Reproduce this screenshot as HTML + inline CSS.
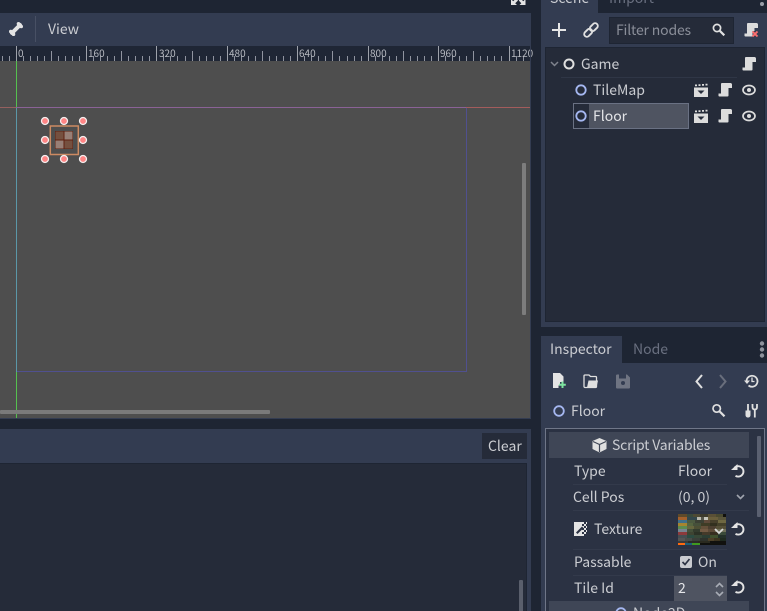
<!DOCTYPE html>
<html><head><meta charset="utf-8">
<style>
html,body{margin:0;padding:0;background:#1e2533;width:767px;height:611px;overflow:hidden}
.a{position:absolute}
.t{position:absolute;font:14px/20px "Noto Sans CJK JP","Liberation Sans",sans-serif;color:#cbcdd2;white-space:nowrap}
.l{font-size:10px;line-height:12px;color:#b8bbc2}
svg{position:absolute;overflow:visible}
</style></head><body>
<div class="a" style="left:0;top:0;width:767px;height:611px;overflow:hidden;background:#1e2533">

<!-- canvas panel -->
<div class="a" style="left:0;top:13px;width:531px;height:33px;background:#333c51"></div>
<div class="a" style="left:35px;top:16px;width:1px;height:26px;background:#485064"></div>
<svg style="left:0;top:0" width="40" height="46"><g fill="#e4e4e4"><path d="M12 33L20 25" stroke="#e4e4e4" stroke-width="4" stroke-linecap="round"/><circle cx="10.800" cy="31.500" r="1.800"/><circle cx="13.500" cy="34.200" r="1.800"/><circle cx="18.500" cy="23.800" r="1.800"/><circle cx="21.200" cy="26.500" r="1.800"/></g></svg>
<div class="t" style="left:48px;top:19px">View</div>
<svg style="left:0;top:0" width="531" height="8"><path d="M511 0V5H517L515.200 3.200 518 0.500 517.500 0H514.500L513.200 1.300 512 0zM525.500 0V5H519.500L521.300 3.200 518.800 0.500 519.200 0H522L523.300 1.300 524.500 0z" fill="#e4e4e4"/></svg>

<!-- ruler -->
<svg style="left:0;top:46px" width="531" height="15">
<rect width="531" height="15" fill="#1f2635"/>
<path d="M16.500 0v15M86.500 0v15M156.500 0v15M227.500 0v15M297.500 0v15M368.500 0v15M438.500 0v15M509.500 0v15" stroke="#9ea2ab" fill="none"/>
<path d="M51.500 5v10M121.500 5v10M192.500 5v10M262.500 5v10M332.500 5v10M403.500 5v10M473.500 5v10" stroke="#9094a0" fill="none"/>
<path d="M2.500 10v5M9.500 10v5M23.500 10v5M30.500 10v5M37.500 10v5M44.500 10v5M58.500 10v5M65.500 10v5M72.500 10v5M79.500 10v5M93.500 10v5M100.500 10v5M107.500 10v5M114.500 10v5M128.500 10v5M135.500 10v5M142.500 10v5M149.500 10v5M163.500 10v5M170.500 10v5M177.500 10v5M185.500 10v5M199.500 10v5M206.500 10v5M213.500 10v5M220.500 10v5M234.500 10v5M241.500 10v5M248.500 10v5M255.500 10v5M269.500 10v5M276.500 10v5M283.500 10v5M290.500 10v5M304.500 10v5M311.500 10v5M318.500 10v5M325.500 10v5M339.500 10v5M347.500 10v5M354.500 10v5M361.500 10v5M375.500 10v5M382.500 10v5M389.500 10v5M396.500 10v5M410.500 10v5M417.500 10v5M424.500 10v5M431.500 10v5M445.500 10v5M452.500 10v5M459.500 10v5M466.500 10v5M480.500 10v5M487.500 10v5M494.500 10v5M501.500 10v5M516.500 10v5M523.500 10v5" stroke="#9094a0" fill="none"/>
</svg>
<div class="t l" style="left:18px;top:47px">0</div>
<div class="t l" style="left:88px;top:47px">160</div>
<div class="t l" style="left:159px;top:47px">320</div>
<div class="t l" style="left:229px;top:47px">480</div>
<div class="t l" style="left:299px;top:47px">640</div>
<div class="t l" style="left:370px;top:47px">800</div>
<div class="t l" style="left:440px;top:47px">960</div>
<div class="t l" style="left:511px;top:47px">1120</div>

<!-- viewport -->
<div class="a" style="left:0;top:61px;width:530px;height:357px;background:#4e4e4e"></div>
<div class="a" style="left:530px;top:13px;width:1px;height:406px;background:#333c51"></div>
<div class="a" style="left:0;top:418px;width:531px;height:1px;background:#333c51"></div>
<svg style="left:0;top:0" width="531" height="420">
<path d="M0 107.500H16" stroke="#95605f" fill="none"/>
<path d="M16 107.500H466" stroke="#8a6296" fill="none"/>
<path d="M466 107.500H530" stroke="#a35c5c" fill="none"/>
<path d="M16.500 61V107" stroke="#55c04f" fill="none"/>
<path d="M16.500 108V372" stroke="#5b97a8" fill="none"/>
<path d="M16.500 372V418" stroke="#55c04f" fill="none"/>
<path d="M466.500 108V371.500H17" stroke="#50508f" fill="none"/>
<rect x="522" y="163" width="4" height="152" rx="1" fill="#7d7d7d"/>
<rect x="0" y="410" width="270" height="4" rx="1" fill="#7a7a7a"/>
<!-- tile -->
<rect x="55" y="131" width="18" height="18" fill="#5e2010"/>
<rect x="55.500" y="131.500" width="8" height="8" fill="#75503f"/>
<rect x="64.500" y="131.500" width="8" height="8" fill="#977f76"/>
<rect x="55.500" y="140.500" width="8" height="8" fill="#977f76"/>
<rect x="64.500" y="140.500" width="8" height="8" fill="#75503f"/>
<rect x="50.300" y="126" width="28" height="28.500" fill="none" stroke="#cc8a62" stroke-width="1.500"/>
<g fill="#ff8585" stroke="#f4eeee" stroke-width="1.300">
<circle cx="45" cy="121" r="3.500"/><circle cx="64" cy="121" r="3.500"/><circle cx="83" cy="121" r="3.500"/>
<circle cx="45" cy="140" r="3.500"/><circle cx="83" cy="140" r="3.500"/>
<circle cx="45" cy="159" r="3.500"/><circle cx="64" cy="159" r="3.500"/><circle cx="83" cy="159" r="3.500"/>
</g>
</svg>

<!-- bottom panel -->
<div class="a" style="left:0;top:429px;width:531px;height:182px;background:#333c51"></div>
<div class="a" style="left:0;top:463px;width:526px;height:148px;background:#252b39;border-top:1px solid #1e2533;border-right:1px solid #1e2533"></div>
<div class="a" style="left:482px;top:433px;width:45px;height:26px;background:#252b39"></div>
<div class="t" style="left:488px;top:436px">Clear</div>
<div class="a" style="left:519px;top:580px;width:3.500px;height:31px;background:#5a5f6c;border-radius:1px 1px 0 0"></div>

<!-- scene dock -->
<div class="a" style="left:541px;top:0;width:57px;height:13px;background:#333c51"></div>
<div class="t" style="left:550px;top:-12px">Scene</div>
<div class="t" style="left:609px;top:-12px;color:#6a7080">Import</div>
<div class="a" style="left:760px;top:2px;width:4px;height:4px;border-radius:2px;background:#9a9ea8"></div>
<div class="a" style="left:541px;top:13px;width:226px;height:314px;background:#333c51"></div>
<div class="a" style="left:545px;top:47px;width:218px;height:273px;background:#252b39;border:1px solid #1e2533"></div>
<svg style="left:541px;top:13px" width="226" height="34">
<path d="M18 10V24M11 17H25" stroke="#e6e6e6" stroke-width="2" fill="none"/>
<g transform="rotate(-45 50 17)" fill="none" stroke="#e0e0e0" stroke-width="1.900"><rect x="41.500" y="14.300" width="9" height="5.400" rx="2.700"/><rect x="49.500" y="14.300" width="9" height="5.400" rx="2.700"/></g>
</svg>
<div class="a" style="left:609px;top:17px;width:123px;height:25px;background:#252b39;border:1px solid #1e2533"></div>
<div class="t" style="left:616px;top:20px;color:#8a8e99;letter-spacing:-.17px">Filter nodes</div>
<svg style="left:712px;top:23px" width="14" height="14"><circle cx="5" cy="5" r="3.600" fill="none" stroke="#e0e0e0" stroke-width="1.700"/><path d="M7.800 7.800L12.300 12.300" stroke="#e0e0e0" stroke-width="2.200"/></svg>
<svg style="left:744px;top:23px" width="16" height="15"><path d="M4 0h8.500c.8 0 1.500.7 1.500 1.500V5h-3.500v3h-2v5.500H1.500c-.8 0-1.200-.6-1-1.500V10.500H3V1c0-.6.400-1 1-1z" fill="#dcdcdc"/><path d="M8.500 8.500l5 5m0-5l-5 5" stroke="#ff6e6e" stroke-width="1.900"/></svg>

<!-- tree rows -->
<svg style="left:545px;top:47px" width="221" height="90">
<path d="M6 15l3.500 3.500 3.500-3.500" fill="none" stroke="#7f838d" stroke-width="1.500"/>
<circle cx="24" cy="17" r="4.500" fill="none" stroke="#e0e0e0" stroke-width="2"/>
<path d="M16 30.500H192" stroke="#2f3646"/>
<circle cx="36" cy="43" r="4.700" fill="none" stroke="#a5b7f0" stroke-width="1.800"/>
</svg>
<div class="t" style="left:581px;top:54px">Game</div>
<div class="t" style="left:593px;top:80px">TileMap</div>
<div class="a" style="left:573px;top:103px;width:116px;height:26px;box-sizing:border-box;background:#4f5461;border:1px solid #6a7183"></div>
<div class="a" style="left:574px;top:104px;width:15px;height:24px;background:#252b39"></div>
<svg style="left:574px;top:104px" width="16" height="24"><circle cx="7" cy="12" r="4.700" fill="none" stroke="#a5b7f0" stroke-width="1.800"/></svg>
<div class="t" style="left:593px;top:106px;color:#e4e5e8">Floor</div>
<svg style="left:690px;top:50px" width="77" height="80">
<defs>
<g id="sc"><path d="M4 0h8.500c.8 0 1.500.7 1.500 1.500V5h-3.500v7.500c0 .6-.4 1-1 1H1.500c-.8 0-1.200-.6-1-1.500V10.500H3V1c0-.6.400-1 1-1z" fill="#dcdcdc"/></g>
<g id="cl"><path d="M1 1.500h2v1.800H1zM4.500 1.200h2V3h-2zM8 1h2v1.800H8zM11.500.7h2v1.800h-2zM0 4.500h14V14H0z" fill="#dcdcdc"/><path d="M3.500 7.500h7l-3.500 3.500z" fill="#252b39"/></g>
<g id="ey"><ellipse cx="7" cy="7" rx="6" ry="4.500" fill="none" stroke="#dcdcdc" stroke-width="1.700"/><circle cx="7" cy="7" r="2" fill="#dcdcdc"/></g>
</defs>
<use href="#sc" x="52" y="7"/>
<use href="#cl" x="4" y="33"/><use href="#sc" x="28" y="33"/><use href="#ey" x="52" y="33"/>
<use href="#cl" x="4" y="59"/><use href="#sc" x="28" y="59"/><use href="#ey" x="52" y="59"/>
</svg>

<!-- inspector -->
<div class="a" style="left:541px;top:336px;width:81px;height:27px;background:#333c51"></div>
<div class="a" style="left:541px;top:363px;width:226px;height:248px;background:#333c51"></div>
<div class="t" style="left:550px;top:339px">Inspector</div>
<div class="t" style="left:633px;top:339px;color:#6a7080">Node</div>
<svg style="left:758px;top:340px" width="8" height="20"><g fill="#8e929c"><circle cx="4" cy="3.500" r="2.200"/><circle cx="4" cy="9.500" r="2.200"/><circle cx="4" cy="15.500" r="2.200"/></g></svg>
<svg style="left:550px;top:372px" width="217" height="50">
<path d="M3 1h7l3.500 3.500V10H10v3.500H8.500V16H3z" fill="#e4e4e4"/><path d="M12.500 9.500v6.500M9.200 12.800h6.600" stroke="#7fe5a0" stroke-width="2"/>
<path d="M35 15.500c-.5 0-1-.5-1-1V4c0-.6.500-1 1-1h4l1.500 1.500h5c.6 0 1 .4 1 1v9c0 .6-.4 1-1 1z" fill="none" stroke="#e0e0e0" stroke-width="1.300"/><path d="M37 15.500l1.500-7H48l-1.500 7z" fill="#e0e0e0"/>
<path d="M67 2.500h10l3 3v10c0 .5-.5 1-1 1H67c-.5 0-1-.5-1-1v-12c0-.5.500-1 1-1z" fill="#6f7482"/><rect x="69" y="2.500" width="7" height="4" fill="#333c51"/><circle cx="73" cy="11" r="2" fill="#333c51"/>
<path d="M152 3L146.500 9.500 152 16" fill="none" stroke="#e0e0e0" stroke-width="2"/>
<path d="M170 3L175.500 9.500 170 16" fill="none" stroke="#696e7c" stroke-width="2"/>
<path d="M196.500 9A5.500 5.500 0 1 1 198.500 13.500" fill="none" stroke="#e0e0e0" stroke-width="1.800"/><path d="M194 8.500h6l-3 3.500z" fill="#e0e0e0"/><path d="M202 5.500V9.500h2.500" fill="none" stroke="#e0e0e0" stroke-width="1.300"/>
<circle cx="9" cy="39" r="4.800" fill="none" stroke="#a5b7f0" stroke-width="1.800"/>
<circle cx="166.700" cy="36.500" r="3.700" fill="none" stroke="#e0e0e0" stroke-width="1.700"/><path d="M169.700 39.500l4.800 4.800" stroke="#e0e0e0" stroke-width="2.200"/>
<path d="M198 32v6.500" stroke="#e0e0e0" stroke-width="1.800"/><path d="M195.500 38.500h5V43c0 1.500-1 2.500-2.500 2.500s-2.500-1-2.500-2.500z" fill="#e0e0e0"/><path d="M202.500 32v3c0 1.500.8 2.500 2.300 2.500s2.200-1 2.200-2.500v-3M204.800 37v8.500" fill="none" stroke="#e0e0e0" stroke-width="1.800"/>
</svg>
<div class="t" style="left:571px;top:401px">Floor</div>

<div class="a" style="left:545px;top:428px;width:220px;height:183px;box-sizing:border-box;background:#2b3243;border:1px solid #6f7688;border-bottom:0"></div>
<div class="a" style="left:549px;top:432px;width:200px;height:26px;background:#3f4656"></div>
<svg style="left:592px;top:438px" width="16" height="15"><path d="M7.500 0L14.500 3v8L7.500 14.500.5 11V3z" fill="#e0e0e0"/><path d="M1 3.500l6.500 3 6.500-3M7.500 6.500V14" fill="none" stroke="#3f4656" stroke-width="1.200"/></svg>
<div class="t" style="left:612px;top:435px;letter-spacing:-.2px">Script Variables</div>
<div class="a" style="left:757px;top:436px;width:4px;height:81px;background:#5a6070;border-radius:1px"></div>

<div class="a" style="left:573px;top:484px;width:154px;height:1px;background:#333a4b"></div>
<div class="a" style="left:573px;top:510px;width:176px;height:1px;background:#333a4b"></div>
<div class="a" style="left:573px;top:549px;width:154px;height:1px;background:#333a4b"></div>
<div class="a" style="left:573px;top:575px;width:154px;height:1px;background:#333a4b"></div>

<div class="t" style="left:574px;top:461px">Type</div>
<div class="t" style="left:678px;top:461px">Floor</div>
<div class="t" style="left:573px;top:487px">Cell Pos</div>
<div class="t" style="left:678px;top:487px">(0, 0)</div>
<div class="t" style="left:594px;top:519px">Texture</div>
<div class="t" style="left:574px;top:552px">Passable</div>
<div class="t" style="left:698px;top:552px">On</div>
<div class="t" style="left:574px;top:578px">Tile Id</div>
<div class="a" style="left:674px;top:576px;width:53px;height:25px;background:#4f5461"></div>
<div class="t" style="left:678px;top:578px;color:#e6e7ea">2</div>

<svg style="left:570px;top:460px" width="197" height="151">
<defs><g id="rv"><path d="M3.500 3.800A5.200 5.200 0 1 1 4.500 11.800" fill="none" stroke="#e4e4e4" stroke-width="1.900"/><path d="M0 6h6.500V0z" fill="#e4e4e4"/></g></defs>
<use href="#rv" x="161" y="4"/><use href="#rv" x="161" y="62"/><use href="#rv" x="161" y="120"/>
<path d="M167 35l3.500 3.500 3.500-3.500" fill="none" stroke="#a0a4ae" stroke-width="1.600"/>
<!-- texture icon -->
<rect x="4" y="62" width="8" height="14" fill="#e4e4e4"/>
<path d="M12 62h2v2h-2zM16 62h1v2h-1zM14 64h2v2h-2zM12 66h2v2h-2zM16 66h1v2h-1zM14 68h2v2h-2zM12 70h2v2h-2zM16 70h1v2h-1zM14 72h2v2h-2zM12 74h2v2h-2z" fill="#e4e4e4"/>
<path d="M6 72.500l6-6 1.500 1.500-6 6z" fill="#2b3243"/>
<!-- checkbox -->
<rect x="110" y="96" width="12" height="12" rx="2" fill="#c9cbd0"/><path d="M112.500 102l2.500 2.500 4.500-5.500" fill="none" stroke="#2b3243" stroke-width="1.700"/>
<!-- spin arrows -->
<path d="M146 127l3.500-3.500 3.500 3.500M146 132l3.500 3.500 3.500-3.500" fill="none" stroke="#a8acb5" stroke-width="1.600"/>
<!-- texture thumb -->
<g transform="translate(108 54)">
<rect width="48" height="31" fill="#11110e"/>
<rect x="0" y="0" width="9" height="3" fill="#5f4a2a"/><rect x="9" y="0" width="6" height="3" fill="#3a4a3c"/><rect x="15" y="0" width="7" height="3" fill="#4e4a34"/><rect x="22" y="0" width="8" height="3" fill="#3c3a2c"/><rect x="30" y="0" width="8" height="3" fill="#5a5036"/><rect x="38" y="0" width="7" height="3" fill="#4a4a30"/>
<rect x="0" y="3" width="9" height="3" fill="#a3602c"/><rect x="9" y="3" width="10" height="3" fill="#33474c"/><rect x="19" y="3" width="4" height="3" fill="#b8b8ae"/><rect x="23" y="3" width="3" height="3" fill="#55554a"/><rect x="26" y="3" width="4" height="3" fill="#c4c4ba"/><rect x="30" y="3" width="10" height="3" fill="#6a5f3c"/><rect x="40" y="3" width="8" height="3" fill="#58543a"/>
<rect x="0" y="6" width="9" height="3" fill="#40708a"/><rect x="9" y="6" width="8" height="3" fill="#4c5a40"/><rect x="17" y="6" width="9" height="3" fill="#3c4034"/><rect x="26" y="6" width="6" height="3" fill="#5e4a3a"/><rect x="32" y="6" width="8" height="3" fill="#47402c"/><rect x="40" y="6" width="8" height="3" fill="#6f6842"/>
<rect x="0" y="9" width="9" height="3" fill="#a6852f"/><rect x="9" y="9" width="6" height="3" fill="#55643f"/><rect x="15" y="9" width="8" height="3" fill="#46503a"/><rect x="23" y="9" width="9" height="3" fill="#3f3c26"/><rect x="32" y="9" width="7" height="3" fill="#33301f"/><rect x="39" y="9" width="9" height="3" fill="#45412a"/>
<rect x="0" y="12" width="9" height="3" fill="#5c8c50"/><rect x="9" y="12" width="7" height="3" fill="#66663e"/><rect x="16" y="12" width="7" height="3" fill="#4d4f34"/><rect x="23" y="12" width="7" height="3" fill="#65503a"/><rect x="30" y="12" width="8" height="3" fill="#4c3f30"/><rect x="38" y="12" width="10" height="3" fill="#565038"/>
<rect x="0" y="15" width="9" height="3" fill="#778490"/><rect x="9" y="15" width="6" height="3" fill="#44503a"/><rect x="15" y="15" width="7" height="3" fill="#343c2e"/><rect x="22" y="15" width="8" height="3" fill="#725a44"/><rect x="30" y="15" width="7" height="3" fill="#5c4a38"/><rect x="37" y="15" width="11" height="3" fill="#70705a"/>
<rect x="0" y="18" width="9" height="3" fill="#8c3a3c"/><rect x="9" y="18" width="7" height="3" fill="#3e4432"/><rect x="16" y="18" width="8" height="3" fill="#2c3226"/><rect x="24" y="18" width="8" height="3" fill="#443a2a"/><rect x="32" y="18" width="8" height="3" fill="#372e20"/><rect x="40" y="18" width="8" height="3" fill="#3a4a3a"/>
<rect x="0" y="21" width="9" height="3" fill="#464e52"/><rect x="9" y="21" width="7" height="3" fill="#2c4c42"/><rect x="16" y="21" width="8" height="3" fill="#384838"/><rect x="24" y="21" width="8" height="3" fill="#2c3e34"/><rect x="32" y="21" width="8" height="3" fill="#40502e"/><rect x="40" y="21" width="8" height="3" fill="#233029"/>
<rect x="0" y="24" width="7" height="3" fill="#555555"/><rect x="7" y="24" width="7" height="3" fill="#484c48"/><rect x="14" y="24" width="8" height="3" fill="#3a3f3a"/><rect x="22" y="24" width="8" height="3" fill="#2e322c"/><rect x="30" y="24" width="6" height="3" fill="#4d4028"/><rect x="36" y="24" width="6" height="3" fill="#3c3420"/><rect x="42" y="24" width="6" height="3" fill="#1f2a20"/>
<rect x="0" y="27" width="10" height="2" fill="#3a3a3a"/><rect x="10" y="27" width="10" height="2" fill="#2c2c28"/><rect x="20" y="27" width="12" height="2" fill="#2a2a20"/>
<rect x="0" y="29" width="7" height="2" fill="#ff6a10"/><rect x="7" y="29" width="7" height="2" fill="#1d5f78"/><rect x="14" y="29" width="8" height="2" fill="#3f9a20"/>
<path d="M37 15l4 4 4-4" fill="none" stroke="#d8d8d8" stroke-width="1.800"/>
</g>
</svg>

<div class="a" style="left:549px;top:601px;width:200px;height:10px;background:#3f4656"></div>
<svg style="left:600px;top:601px" width="40" height="10"><circle cx="21" cy="12" r="4.800" fill="none" stroke="#a5b7f0" stroke-width="1.800"/></svg>
<div class="t" style="left:633px;top:603px">Node2D</div>

</div>
</body></html>
